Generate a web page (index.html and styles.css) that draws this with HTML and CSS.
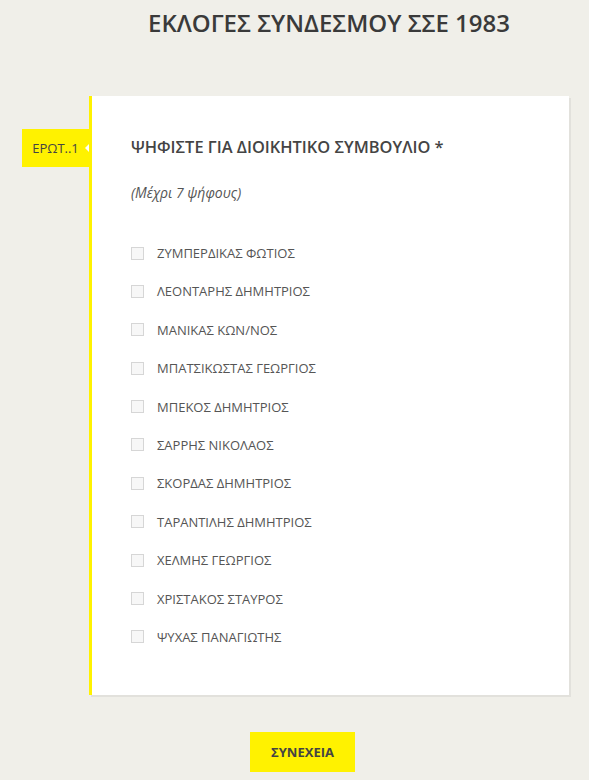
FILE: index.html
```html
<!DOCTYPE html>
<html lang="el">
<head>
<meta charset="utf-8">
<link rel="stylesheet" href="styles.css">
</head>
<body>
<div class="page">
  <h1 class="title">ΕΚΛΟΓΕΣ ΣΥΝΔΕΣΜΟΥ ΣΣΕ 1983</h1>
  <div class="card">
    <div class="qlabel">ΕΡΩΤ..1</div>
    <h2 class="qtitle">ΨΗΦΙΣΤΕ ΓΙΑ ΔΙΟΙΚΗΤΙΚΟ ΣΥΜΒΟΥΛΙΟ *</h2>
    <p class="hint">(Μέχρι 7 ψήφους)</p>
    <ul class="options">
      <li class="option"><span class="box"></span>ΖΥΜΠΕΡΔΙΚΑΣ ΦΩΤΙΟΣ</li>
      <li class="option"><span class="box"></span>ΛΕΟΝΤΑΡΗΣ ΔΗΜΗΤΡΙΟΣ</li>
      <li class="option"><span class="box"></span>ΜΑΝΙΚΑΣ ΚΩΝ/ΝΟΣ</li>
      <li class="option"><span class="box"></span>ΜΠΑΤΣΙΚΩΣΤΑΣ ΓΕΩΡΓΙΟΣ</li>
      <li class="option"><span class="box"></span>ΜΠΕΚΟΣ ΔΗΜΗΤΡΙΟΣ</li>
      <li class="option"><span class="box"></span>ΣΑΡΡΗΣ ΝΙΚΟΛΑΟΣ</li>
      <li class="option"><span class="box"></span>ΣΚΟΡΔΑΣ ΔΗΜΗΤΡΙΟΣ</li>
      <li class="option"><span class="box"></span>ΤΑΡΑΝΤΙΛΗΣ ΔΗΜΗΤΡΙΟΣ</li>
      <li class="option"><span class="box"></span>ΧΕΛΜΗΣ ΓΕΩΡΓΙΟΣ</li>
      <li class="option"><span class="box"></span>ΧΡΙΣΤΑΚΟΣ ΣΤΑΥΡΟΣ</li>
      <li class="option"><span class="box"></span>ΨΥΧΑΣ ΠΑΝΑΓΙΩΤΗΣ</li>
    </ul>
  </div>
  <button class="next">ΣΥΝΕΧΕΙΑ</button>
</div>
</body>
</html>
```
FILE: styles.css
```css
html, body {
  margin: 0;
  padding: 0;
}
body {
  background: #f0efe9;
  font-family: "Open Sans", "Noto Sans", sans-serif;
  color: #444;
  height: 780px;
  overflow: hidden;
}
.page {
  width: 480px;
  margin-left: 89px;
  display: flex;
  flex-direction: column;
}
.title {
  margin: 7px 0 0;
  font-size: 24px;
  line-height: 32px;
  font-weight: 600;
  text-align: center;
  color: #3a3a3a;
}
.card {
  position: relative;
  margin-top: 57px;
  background: #fff;
  border-left: 3px solid #fff200;
  box-shadow: 2px 2px 0 #e2e1dc;
  padding: 36px 40px 44px 39px;
  box-sizing: border-box;
  height: 599px;
}
.qlabel {
  position: absolute;
  left: -70px;
  top: 33px;
  width: 67px;
  height: 38px;
  background: #fff200;
  font-size: 13px;
  line-height: 38px;
  text-align: center;
  color: #444;
}
.qlabel::after {
  content: "";
  position: absolute;
  right: 0;
  top: 15px;
  border-style: solid;
  border-width: 4px 4px 4px 0;
  border-color: transparent #fff transparent transparent;
}
.qtitle {
  margin: 0;
  font-size: 16.4px;
  line-height: 30px;
  font-weight: 600;
  color: #444;
}
.hint {
  margin: 20px 0 0;
  font-size: 14px;
  line-height: 22px;
  font-style: italic;
  color: #555;
}
.options {
  list-style: none;
  margin: 39px 0 0;
  padding: 0;
  display: flex;
  flex-direction: column;
  gap: 18.4px;
}
.option {
  display: flex;
  align-items: center;
  gap: 13px;
  font-size: 13px;
  line-height: 20px;
  color: #555;
}
.box {
  width: 11px;
  height: 11px;
  border: 1px solid #d6d6d6;
  background: #f7f7f7;
  flex: none;
}
.next {
  align-self: flex-start;
  margin: 37px 0 0 161px;
  width: 105px;
  height: 40px;
  border: none;
  background: #fff200;
  font-family: "Open Sans", "Noto Sans", sans-serif;
  font-size: 13px;
  font-weight: 700;
  color: #444;
  padding: 0;
}
```
